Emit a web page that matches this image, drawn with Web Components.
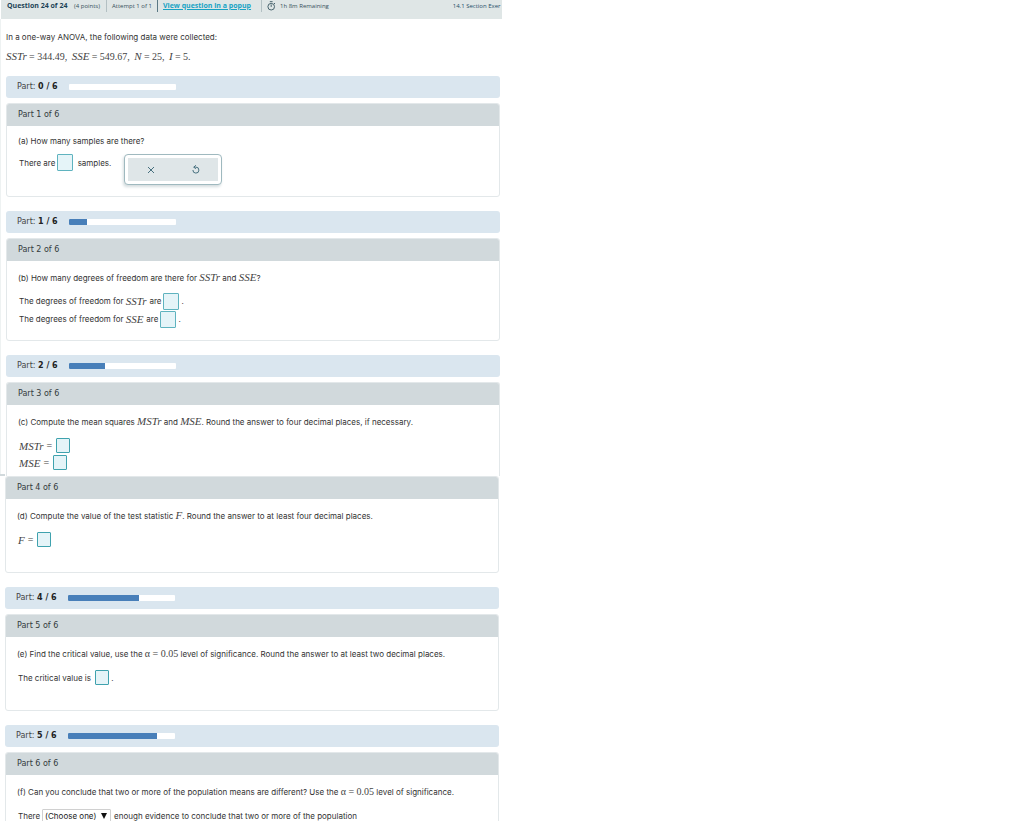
<!DOCTYPE html>
<html lang="en">
<head>
<meta charset="utf-8">
<title>14.1 Section Exercises</title>
<style>
  body { margin: 0; background: #fff; }
</style>
</head>
<body>
<quiz-page></quiz-page>
<script>
const define = (name, html, setup) => {
  const template = document.createElement('template');
  template.innerHTML = html;
  customElements.define(name, class extends HTMLElement {
    constructor() {
      super();
      this.attachShadow({ mode: 'open' }).append(template.content.cloneNode(true));
    }
    connectedCallback() { if (setup) setup(this, this.shadowRoot); }
  });
};

/* Italic variable name or serif number inside a sentence */
define('math-text', `
<style>
  :host { font: italic 11px/10px "Liberation Serif", serif; color: #444; }
  :host([number]) { font-style: normal; font-size: 10px; }
</style><slot></slot>`);

/* Small answer field; the accessible name comes from the label attribute */
define('answer-box', `
<style>
  :host { display: inline-flex; margin: 0 2px; vertical-align: middle; }
  input { box-sizing: border-box; width: 14px; height: 15px; margin: 0; padding: 0; border: 1px solid #3fa2ae; border-radius: 1px; background: #e5f4f8; font: 8px Inter, sans-serif; outline: 0; }
  :host([large]) input { width: 16px; height: 17px; border-color: #5fb3bf; }
</style><input type="text">`,
(host, root) => root.querySelector('input').setAttribute('aria-label', host.getAttribute('label')));

define('part-progress', `
<style>
  :host { display: flex; align-items: center; height: 22px; padding-left: 11px; border-radius: 3px; background: #dae6ef; font-family: "DejaVu Sans", sans-serif; }
  label { width: 52px; color: #444; }
  b { color: #222; }
  progress { appearance: none; -webkit-appearance: none; display: block; width: 107px; height: 6px; border: 0; border-radius: 1px; overflow: hidden; background: #fff; }
  progress::-webkit-progress-bar { background: #fff; }
  progress::-webkit-progress-value { background: #487fb9; }
</style>
<label for="bar">Part: <b></b></label><progress id="bar" max="6"></progress>`,
(host, root) => {
  const done = host.getAttribute('done');
  root.querySelector('b').textContent = done + ' / 6';
  root.querySelector('progress').value = Number(done);
});

define('part-card', `
<style>
  :host { display: block; box-sizing: border-box; border: 1px solid #e3e8ea; border-radius: 3px; overflow: hidden; }
  h2 { margin: -1px -1px 0; height: 23px; padding-left: 12px; font: 8px/23px "DejaVu Sans", sans-serif; color: #33393b; background: #d1d9dc; }
  .body { padding: 11px 11px 0; }
</style>
<h2></h2><div class="body"><slot></slot></div>`,
(host, root) => root.querySelector('h2').textContent = 'Part ' + host.getAttribute('number') + ' of 6');

define('answer-tools', `
<style>
  :host { display: flex; box-sizing: border-box; width: 98px; height: 31px; padding: 3px; border: 1px solid #9fb9bf; border-radius: 4px; background: #fff; box-shadow: -1px 2px 3px #d5dddf; }
  button { flex: 1; display: grid; place-items: center; margin: 0; padding: 0; border: 0; background: #dfe6e8; }
  svg { display: block; fill: none; stroke: #47707f; stroke-width: 1; }
</style>
<button type="button" aria-label="Clear"><svg width="8" height="8" viewBox="0 0 8 8"><path d="M1 1l6 6M7 1L1 7"/></svg></button>
<button type="button" aria-label="Undo"><svg width="8" height="9" viewBox="0 0 8 9"><path d="M.9 5a3 3 0 1 0 3-2.9H1.6M3.8 .2L1.9 2.1l1.9 1.9"/></svg></button>`);

define('quiz-header', `
<style>
  :host { display: flex; align-items: center; box-sizing: border-box; height: 19px; margin-left: 1px; padding: 0 0 7px 6px; overflow: hidden; white-space: nowrap; background: #dfe6e6; color: #36505a; font: 6px/12px "Open Sans", sans-serif; }
  h1 { margin: 0; width: 67px; font: bold 7px/12px "Open Sans", sans-serif; color: #1d4457; }
  .points { width: 32px; }
  .attempt, .link, .time { border-left: 1px solid #b3c0c3; padding-left: 5px; }
  .attempt { width: 45px; }
  .link { border-color: #5a7884; width: 98px; font: bold 7px/12px "Open Sans", sans-serif; }
  a { color: #18a3c4; }
  .time { display: flex; align-items: center; gap: 4px; }
  .book { width: 49px; margin-left: auto; overflow: hidden; color: #1f5068; }
  svg { display: block; fill: none; stroke: #47626c; stroke-width: 1; }
</style>
<h1>Question 24 of 24</h1><span class="points">(4 points)</span>
<span class="attempt">Attempt 1 of 1</span>
<span class="link"><a href="#popup">View question in a popup</a></span>
<span class="time"><svg width="9" height="10" viewBox="0 0 9 10"><circle cx="4.2" cy="5.7" r="3.3"/><path d="M4.2 3.5v2.4M2.8.7h2.8M7 2l1 1"/></svg>1h 8m Remaining</span>
<span class="book">14.1 Section Exer</span>`);

define('quiz-page', `
<style>
  :host { display: block; width: 49%; font: 8px/12px Inter, "Noto Sans", sans-serif; color: #333; }
  main { display: block; }
  p { margin: 0; height: 12px; white-space: nowrap; }
  .sheet { position: relative; padding: 0 2px 0 5px; border-left: 1px solid #eef2f2; }
  .sheet:first-of-type::after { content: ""; position: absolute; left: -1px; bottom: 0; width: 5px; height: 2px; background: #d1d9dc; }
  .second { padding: 0 3px 0 5px; border: 0; }
  .intro { padding: 12px 0 13px; display: grid; gap: 8px; }
  part-card { margin-top: 5px; }
  part-progress { margin-top: 14px; }
  .intro + part-progress { margin-top: 0; }
  .rows { padding-left: 1px; }
  .row { display: flex; align-items: center; white-space: nowrap; }
  .row math-text { margin: 0 3px 0 2px; }
  .row math-text.lead { margin: 0 3px 0 0; }
  .row math-text[number] { margin: 0 2px 0 0; }
  .first { height: 94px; }
  .first p { margin-top: -2px; }
  .first .row { margin-top: 7px; height: 31px; align-items: flex-start; }
  .first .row > span { line-height: 18px; }
  .first .row answer-tools { margin-left: 13px; }
  .b { height: 103px; }
  .c { height: 94px; border-bottom: 0; border-radius: 3px 3px 0 0; }
  .d { height: 97px; margin-top: 0; }
  .e { height: 97px; }
  .f { height: 80px; }
  .tall { margin-top: 8px; }
  .mid { margin-top: 9px; }
  .tall .row { height: 18px; }
  .mid .row { height: 17px; }
  select { appearance: none; -webkit-appearance: none; height: 14px; width: 69px; margin: 0 3px 0 2px; padding: 0 0 0 2px; border: 1px solid #d0d0d0; border-radius: 1px; font: 8px/12px Inter, "Noto Sans", sans-serif; color: #222; background: #fff; }
  .pick { display: inline-grid; align-items: center; }
  .pick > * { grid-area: 1 / 1; }
  .pick svg { justify-self: end; margin-right: 7px; fill: #111; pointer-events: none; }
</style>
<main>
  <quiz-header></quiz-header>
  <section class="sheet">
    <div class="intro">
      <p>In a one-way ANOVA, the following data were collected:</p>
      <p><math-text>SSTr</math-text> <math-text number>= 344.49,</math-text>&nbsp; <math-text>SSE</math-text> <math-text number>= 549.67,</math-text>&nbsp; <math-text>N</math-text> <math-text number>= 25,</math-text>&nbsp; <math-text>I</math-text> <math-text number>= 5.</math-text></p>
    </div>
    <part-progress done="0"></part-progress>
    <part-card number="1" class="first">
      <p>(a) How many samples are there?</p>
      <div class="rows row"><span>There are</span><answer-box large label="Number of samples"></answer-box><span>&nbsp;samples.</span><answer-tools></answer-tools></div>
    </part-card>
    <part-progress done="1"></part-progress>
    <part-card number="2" class="b">
      <p>(b) How many degrees of freedom are there for <math-text>SSTr</math-text> and <math-text>SSE</math-text>?</p>
      <div class="rows tall">
        <div class="row">The degrees of freedom for <math-text>SSTr</math-text> are <answer-box large label="Degrees of freedom for SSTr"></answer-box>.</div>
        <div class="row">The degrees of freedom for <math-text>SSE</math-text> are <answer-box large label="Degrees of freedom for SSE"></answer-box>.</div>
      </div>
    </part-card>
    <part-progress done="2"></part-progress>
    <part-card number="3" class="c">
      <p>(c) Compute the mean squares <math-text>MSTr</math-text> and <math-text>MSE</math-text>. Round the answer to four decimal places, if necessary.</p>
      <div class="rows mid">
        <div class="row"><math-text class="lead">MSTr</math-text><math-text number>=</math-text><answer-box label="MSTr"></answer-box></div>
        <div class="row"><math-text class="lead">MSE</math-text><math-text number>=</math-text><answer-box label="MSE"></answer-box></div>
      </div>
    </part-card>
  </section>
  <section class="sheet second">
    <part-card number="4" class="d">
      <p>(d) Compute the value of the test statistic <math-text>F</math-text>. Round the answer to at least four decimal places.</p>
      <div class="rows mid"><div class="row"><math-text class="lead">F</math-text><math-text number>=</math-text><answer-box label="F"></answer-box></div></div>
    </part-card>
    <part-progress done="4"></part-progress>
    <part-card number="5" class="e">
      <p>(e) Find the critical value, use the <math-text number>α = 0.05</math-text> level of significance. Round the answer to at least two decimal places.</p>
      <div class="rows mid"><div class="row">The critical value is&nbsp;<answer-box label="Critical value"></answer-box>.</div></div>
    </part-card>
    <part-progress done="5"></part-progress>
    <part-card number="6" class="f">
      <p>(f) Can you conclude that two or more of the population means are different? Use the <math-text number>α = 0.05</math-text> level of significance.</p>
      <div class="rows mid"><div class="row">There <span class="pick"><select aria-label="Conclusion"><option>(Choose one)</option></select><svg width="6" height="6" viewBox="0 0 6 6"><path d="M0 0h6L3 6z"/></svg></span>enough evidence to conclude that two or more of the population</div></div>
    </part-card>
  </section>
</main>`);
</script>
</body>
</html>
